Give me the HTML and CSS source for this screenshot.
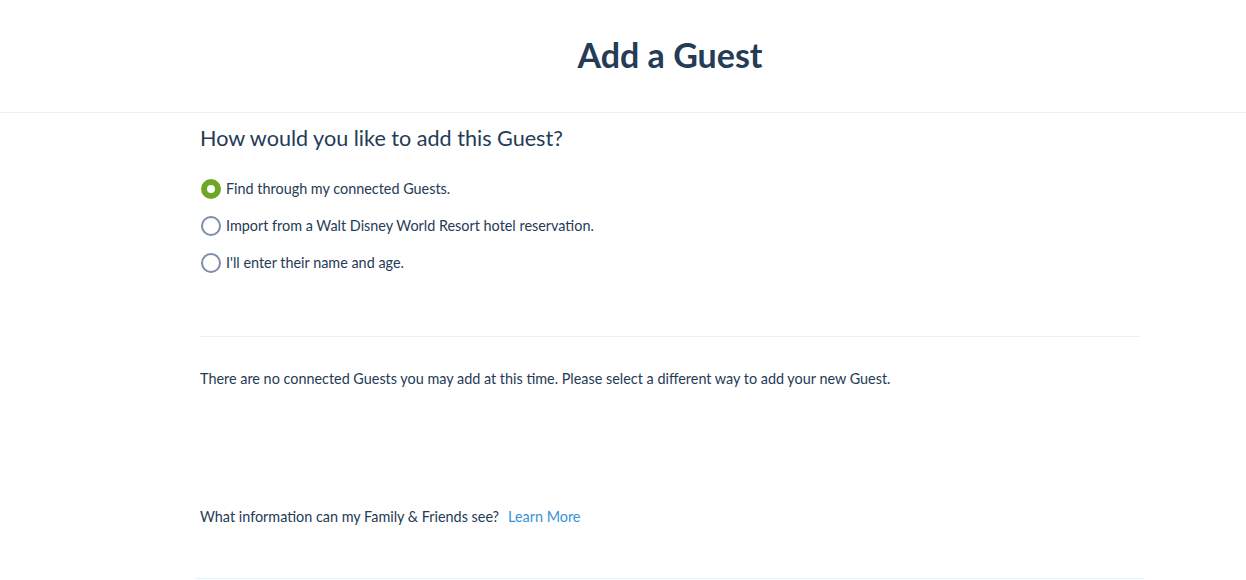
FILE: index.html
```html
<!DOCTYPE html>
<html>
<head>
<meta charset="utf-8">
<link rel="stylesheet" href="styles.css">
</head>
<body>
<header class="page-header">
  <div class="container">
    <h1 class="title">Add a Guest</h1>
  </div>
</header>
<main class="container">
  <h2 class="question">How would you like to add this Guest?</h2>
  <ul class="options">
    <li class="option"><span class="radio checked"></span><span>Find through my connected Guests.</span></li>
    <li class="option"><span class="radio"></span><span>Import from a Walt Disney World Resort hotel reservation.</span></li>
    <li class="option"><span class="radio"></span><span>I'll enter their name and age.</span></li>
  </ul>
  <hr class="divider">
  <p class="message">There are no connected Guests you may add at this time. Please select a different way to add your new Guest.</p>
  <p class="info">What information can my Family &amp; Friends see?<a class="link" href="#">Learn More</a></p>
</main>
<div class="bottom-line"></div>
</body>
</html>
```
FILE: styles.css
```css
html, body {
  margin: 0;
  padding: 0;
  background: #fff;
}
body {
  font-family: Lato, "Open Sans", sans-serif;
  color: #253b56;
}
.container {
  width: 940px;
  margin-left: 200px;
}
.page-header {
  height: 113px;
  border-bottom: 1px solid #e3f2f4;
  box-sizing: border-box;
}
.title {
  margin: 0;
  padding-top: 33px;
  text-align: center;
  font-size: 34px;
  font-weight: 700;
  line-height: 44px;
  color: #253b56;
}
.question {
  margin: 11px 0 0;
  font-size: 21.6px;
  font-weight: 400;
  line-height: 28px;
  color: #253b56;
}
.options {
  list-style: none;
  margin: 27px 0 0;
  padding: 0;
  display: flex;
  flex-direction: column;
  gap: 17px;
}
.option {
  display: flex;
  align-items: center;
  gap: 5px;
  font-size: 14.4px;
  line-height: 20px;
  color: #253b56;
}
.radio {
  width: 20px;
  height: 20px;
  box-sizing: border-box;
  border-radius: 50%;
  border: 2px solid #7a8dab;
  margin-left: 1px;
  flex: none;
  background: #fff;
}
.radio.checked {
  border: 6px solid #6ea626;
  background: #fff;
}
.divider {
  margin: 63px 0 0;
  border: 0;
  border-top: 1px solid #e3f2f4;
  height: 0;
}
.message {
  margin: 32px 0 0;
  font-size: 14.4px;
  line-height: 20px;
}
.info {
  margin: 118px 0 0;
  font-size: 14.4px;
  line-height: 20px;
}
.link {
  margin-left: 9px;
  color: #3593d6;
  text-decoration: none;
}
.bottom-line {
  width: 950px;
  margin: 51px 0 0 195px;
  border-top: 1px solid #e3f2f4;
}
```
